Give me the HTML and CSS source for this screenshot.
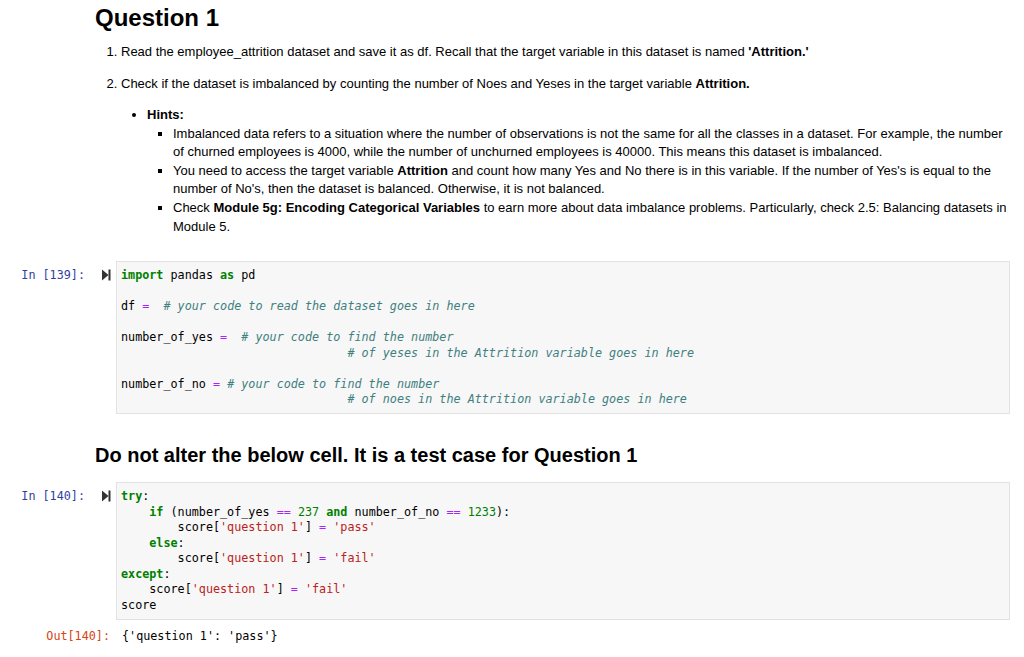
FILE: index.html
```html
<!DOCTYPE html>
<html>
<head>
<meta charset="utf-8">
<link rel="stylesheet" href="styles.css">
</head>
<body>
<div class="notebook">
  <div class="md-cell">
    <h2 class="title">Question 1</h2>
    <ol class="steps">
      <li><p>Read the employee_attrition dataset and save it as df. Recall that the target variable in this dataset is named <b>'Attrition.'</b></p></li>
      <li><p>Check if the dataset is imbalanced by counting the number of Noes and Yeses in the target variable <b>Attrition.</b></p>
        <ul class="hints">
          <li><b>Hints:</b>
            <ul class="sub">
              <li>Imbalanced data refers to a situation where the number of observations is not the same for all the classes in a dataset. For example, the number of churned employees is 4000, while the number of unchurned employees is 40000. This means this dataset is imbalanced.</li>
              <li>You need to access the target variable <b>Attrition</b> and count how many Yes and No there is in this variable. If the number of Yes's is equal to the number of No's, then the dataset is balanced. Otherwise, it is not balanced.</li>
              <li>Check <b>Module 5g: Encoding Categorical Variables</b> to earn more about data imbalance problems. Particularly, check 2.5: Balancing datasets in Module 5.</li>
            </ul>
          </li>
        </ul>
      </li>
    </ol>
  </div>

  <div class="code-cell first">
    <div class="prompt in">In&nbsp;[139]:</div>
    <div class="run"><svg width="9" height="12" viewBox="0 0 9 12"><polygon points="0,0.5 6.5,6 0,11.5" fill="#333"/><rect x="6.5" y="0.5" width="2" height="11" fill="#333"/></svg></div>
    <div class="input-area"><pre><span class="k">import</span> pandas <span class="k">as</span> pd

df <span class="o">=</span>  <span class="c"># your code to read the dataset goes in here</span>

number_of_yes <span class="o">=</span>  <span class="c"># your code to find the number</span>
                                <span class="c"># of yeses in the Attrition variable goes in here</span>

number_of_no <span class="o">=</span> <span class="c"># your code to find the number</span>
                                <span class="c"># of noes in the Attrition variable goes in here</span></pre></div>
  </div>

  <div class="md-cell">
    <h3 class="subtitle">Do not alter the below cell. It is a test case for Question 1</h3>
  </div>

  <div class="code-cell second">
    <div class="prompt in">In&nbsp;[140]:</div>
    <div class="run"><svg width="9" height="12" viewBox="0 0 9 12"><polygon points="0,0.5 6.5,6 0,11.5" fill="#333"/><rect x="6.5" y="0.5" width="2" height="11" fill="#333"/></svg></div>
    <div class="input-area"><pre><span class="k">try</span>:
    <span class="k">if</span> (number_of_yes <span class="o">==</span> <span class="m">237</span> <span class="k">and</span> number_of_no <span class="o">==</span> <span class="m">1233</span>):
        score[<span class="s">'question 1'</span>] <span class="o">=</span> <span class="s">'pass'</span>
    <span class="k">else</span>:
        score[<span class="s">'question 1'</span>] <span class="o">=</span> <span class="s">'fail'</span>
<span class="k">except</span>:
    score[<span class="s">'question 1'</span>] <span class="o">=</span> <span class="s">'fail'</span>
score</pre></div>
  </div>

  <div class="output-row">
    <div class="prompt out">Out[140]:</div>
    <div class="output"><pre>{'question 1': 'pass'}</pre></div>
  </div>
</div>
</body>
</html>
```

FILE: styles.css
```css
html, body {
  margin: 0;
  padding: 0;
  background: #ffffff;
}

body {
  font-family: "Liberation Sans", Arial, sans-serif;
  font-size: 13px;
  line-height: 18.57px;
  color: #000;
}

.notebook {
  width: 1024px;
}

.md-cell {
  padding-left: 95px;
  padding-right: 14px;
}

.title {
  font-size: 24px;
  line-height: 28px;
  font-weight: bold;
  margin: 4px 0 0 0;
}

.steps {
  margin: 11px 0 0 0;
  padding-left: 26px;
}

.steps p {
  margin: 0 0 13px 0;
}

.hints {
  list-style: disc;
  margin: 1px 0 0 0;
  padding-left: 26px;
}

.sub {
  list-style: square;
  margin: 0;
  padding-left: 26px;
}

.code-cell {
  display: flex;
  align-items: flex-start;
}

.code-cell.first {
  margin-top: 25px;
}

.code-cell.second {
  margin-top: 15px;
}

.prompt {
  font-family: "DejaVu Sans Mono", monospace;
  font-size: 11.75px;
  line-height: 15.6px;
  text-align: right;
  box-sizing: border-box;
  white-space: nowrap;
}

.prompt.in {
  width: 90px;
  padding-right: 5px;
  padding-top: 6.5px;
  color: #303F9F;
}

.run {
  width: 26px;
  box-sizing: border-box;
  padding-left: 12px;
  padding-top: 7.5px;
  line-height: 0;
}

.input-area {
  flex: 1;
  margin-right: 14px;
  background: #f7f7f7;
  border: 1px solid #e2e2e2;
  padding: 5.5px 4px;
}

pre {
  margin: 0;
  font-family: "DejaVu Sans Mono", monospace;
  font-size: 11.75px;
  line-height: 15.6px;
  color: #000;
}

.k { color: #008000; font-weight: bold; }
.o { color: #AA22FF; }
.c { color: #408080; font-style: italic; }
.s { color: #BA2121; }
.m { color: #008000; }

.subtitle {
  font-size: 20px;
  line-height: 24px;
  font-weight: bold;
  margin: 29px 0 0 0;
}

.output-row {
  display: flex;
  margin-top: 9px;
}

.prompt.out {
  width: 116px;
  padding-right: 6px;
  color: #D84315;
}

.output {
  padding-left: 6px;
}
```
